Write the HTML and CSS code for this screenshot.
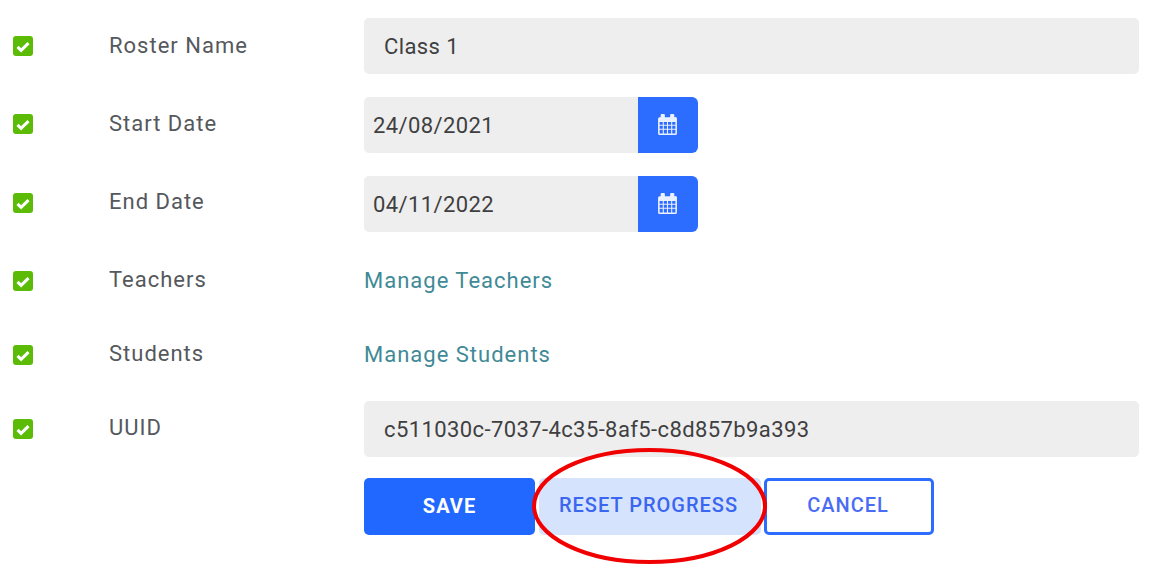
FILE: index.html
```html
<!DOCTYPE html>
<html lang="en">
<head>
    <meta charset="UTF-8">
    <meta name="viewport" content="width=device-width, initial-scale=1.0">
    <title>Edit Roster</title>
    <link rel="stylesheet" href="styles.css">
</head>
<body>
    <svg width="0" height="0" class="defs">
        <symbol id="check" viewBox="0 0 20 20">
            <rect width="20" height="20" rx="3" fill="#5cbb06"/>
            <path d="M4.500 10.800l3.600 3.500 7.400-7.200" fill="none" stroke="#fff" stroke-width="3"/>
        </symbol>
        <symbol id="cal" viewBox="0 0 20 20">
            <path fill="#e9f0ff" fill-rule="evenodd" d="M4.500 0h2a1 1 0 0 1 1 1v2h5V1a1 1 0 0 1 1-1h2a1 1 0 0 1 1 1v2h.5A1.500 1.500 0 0 1 19 4.500V18.500A1.500 1.500 0 0 1 17.500 20h-15A1.500 1.500 0 0 1 1 18.500V4.500A1.500 1.500 0 0 1 2.500 3H3.500V1a1 1 0 0 1 1-1zM2.500 7.500v2.800h3V7.500zm4 0v2.800h3V7.500zm4 0v2.800h3V7.500zm4 0v2.800h3V7.500zM2.500 11.300v2.800h3v-2.800zm4 0v2.800h3v-2.800zm4 0v2.800h3v-2.800zm4 0v2.800h3v-2.800zM2.500 15.100v3.400h3v-3.400zm4 0v3.400h3v-3.400zm4 0v3.400h3v-3.400zm4 0v3.400h3v-3.400z"/>
        </symbol>
    </svg>

    <form class="roster-form">
        <div class="labels">
            <div class="label-row"><svg class="tick"><use href="#check"/></svg><label class="name">Roster Name</label></div>
            <div class="label-row"><svg class="tick"><use href="#check"/></svg><label class="name">Start Date</label></div>
            <div class="label-row"><svg class="tick"><use href="#check"/></svg><label class="name">End Date</label></div>
            <div class="label-row short"><svg class="tick"><use href="#check"/></svg><label class="name">Teachers</label></div>
            <div class="label-row short"><svg class="tick"><use href="#check"/></svg><label class="name">Students</label></div>
            <div class="label-row short"><svg class="tick"><use href="#check"/></svg><label class="name">UUID</label></div>
        </div>
        <div class="controls">
            <div class="field wide">Class 1</div>
            <div class="date">
                <div class="field">24/08/2021</div>
                <button type="button" class="cal-btn"><svg class="cal"><use href="#cal"/></svg></button>
            </div>
            <div class="date">
                <div class="field">04/11/2022</div>
                <button type="button" class="cal-btn"><svg class="cal"><use href="#cal"/></svg></button>
            </div>
            <div class="link-row"><a class="manage" href="#">Manage Teachers</a></div>
            <div class="link-row last"><a class="manage" href="#">Manage Students</a></div>
            <div class="field wide">c511030c-7037-4c35-8af5-c8d857b9a393</div>
            <div class="actions">
                <button type="button" class="btn save">SAVE</button>
                <button type="button" class="btn reset">RESET PROGRESS</button>
                <button type="button" class="btn cancel">CANCEL</button>
            </div>
        </div>
    </form>

    <!-- red circle drawn over the screenshot -->
    <svg class="circle" width="238" height="120" viewBox="0 0 238 120">
        <ellipse cx="118.500" cy="58" rx="115.500" ry="56" fill="none" stroke="#f00000" stroke-width="4"/>
    </svg>
</body>
</html>
```

FILE: styles.css
```css
body {
    font-family: 'Roboto', sans-serif;
    margin: 0;
    overflow: hidden;
    position: relative;
    height: 568px;
    background: #fff;
    color: #55585c;
}
.defs {
    position: absolute;
}
.roster-form {
    display: flex;
    padding: 18px 14px 0 13px;
}
.labels {
    width: 351px;
    flex: none;
    padding-top: 11px;
}
.label-row {
    display: flex;
    align-items: flex-start;
    height: 78px;
}
.label-row.short {
    height: 74px;
}
.tick {
    width: 20px;
    height: 20px;
    margin-top: 7px;
    flex: none;
}
.label-row:nth-child(n+3) .tick {
    margin-top: 8px;
}
.name {
    margin-left: 76px;
    font-size: 22px;
    line-height: 34px;
    letter-spacing: 1px;
}
.controls {
    flex: 1;
    min-width: 0;
}
.field {
    flex: 1;
    height: 56px;
    line-height: 57px;
    background: #eee;
    border-radius: 5px 0 0 5px;
    padding-left: 9px;
    font-size: 22px;
    letter-spacing: 0.4px;
    color: #3f3f42;
    margin-bottom: 23px;
}
.wide {
    border-radius: 5px;
    padding-left: 20px;
}
.date {
    display: flex;
    width: 334px;
    margin-bottom: 23px;
}
.date .field {
    margin-bottom: 0;
}
.cal-btn {
    width: 60px;
    height: 56px;
    flex: none;
    border: none;
    padding: 0 2px 2px 0;
    background: #2c6dff;
    border-radius: 0 6px 6px 0;
    display: flex;
    align-items: center;
    justify-content: center;
}
.cal {
    width: 21px;
    height: 21px;
}
.link-row {
    height: 50px;
    line-height: 52px;
    margin-bottom: 24px;
}
.link-row.last {
    margin-bottom: 22px;
}
.manage {
    color: #3f8a96;
    font-size: 22px;
    letter-spacing: 1px;
    text-decoration: none;
}
.actions {
    display: flex;
    margin-top: -2px;
}
.btn {
    height: 57px;
    font-family: 'Roboto', sans-serif;
    font-size: 20px;
    font-weight: 500;
    letter-spacing: 1px;
    border-radius: 5px;
    border: none;
    padding: 0 0 3px;
}
.save {
    width: 171px;
    background: #2068ff;
    color: #fff;
    font-weight: 700;
    padding-bottom: 2px;
}
.reset {
    width: 222px;
    margin: 0 3px 0 4px;
    padding-right: 3px;
    background: #d6e3fc;
    color: #3a66f0;
}
.cancel {
    width: 170px;
    padding-right: 2px;
    background: #fff;
    color: #4a6cf5;
    border: 3px solid #2c6dff;
}
.circle {
    position: absolute;
    left: 531px;
    top: 448px;
}
```
